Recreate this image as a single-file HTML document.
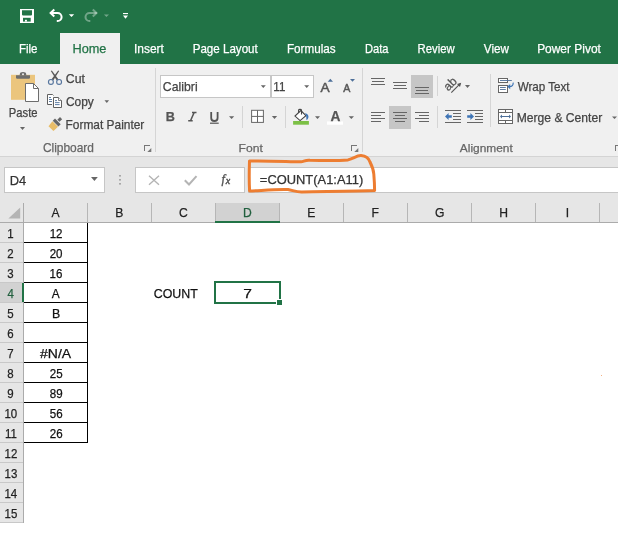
<!DOCTYPE html>
<html><head><meta charset="utf-8"><style>
html,body{margin:0;padding:0}
body{width:620px;height:533px;overflow:hidden;background:#fff;position:relative;font-family:"Liberation Sans",sans-serif}
.a{position:absolute;box-sizing:border-box}
</style></head><body>
<div class="a" style="left:0;top:0;width:618px;height:64px;background:#217346"></div>
<div class="a" style="left:60px;top:33px;width:60px;height:31px;background:#f0f0f0"></div>
<div class="a" style="left:0;top:64px;width:618px;height:92px;background:#f0f0f0"></div>
<div class="a" style="left:0;top:156px;width:618px;height:1px;background:#d4d4d4"></div>
<div class="a" style="left:0;top:157px;width:618px;height:66px;background:#e6e6e6"></div>
<!-- name box -->
<div class="a" style="left:4px;top:167px;width:101px;height:26px;background:#fff;border:1px solid #c6c6c6"></div>
<div class="a" style="left:135px;top:167px;width:110px;height:26px;background:#fff;border:1px solid #c6c6c6"></div>
<div class="a" style="left:248px;top:167px;width:370px;height:26px;background:#fff;border:1px solid #c6c6c6;border-right:none"></div>
<!-- combo boxes -->
<div class="a" style="left:160px;top:75px;width:111px;height:23px;background:#fff;border:1px solid #c6c6c6"></div>
<div class="a" style="left:271px;top:75px;width:43px;height:23px;background:#fff;border:1px solid #c6c6c6"></div>
<!-- selected align buttons -->
<div class="a" style="left:411px;top:75px;width:22px;height:23px;background:#c6c6c6"></div>
<div class="a" style="left:389px;top:106px;width:22px;height:23px;background:#c6c6c6"></div>
<!-- sheet -->
<div class="a" style="left:0;top:223px;width:24px;height:300px;background:#e6e6e6"></div>
<svg class="a" style="left:0;top:0;will-change:transform" width="620" height="533" viewBox="0 0 620 533">
<!-- QAT -->
<g fill="#fff">
  <rect x="20" y="9" width="14" height="14"/>
</g>
<g fill="#217346">
  <path d="M22 10.2 H32 V14.8 L31.3 15.6 H22.7 L22 14.8 Z"/>
  <rect x="23" y="17.8" width="7.7" height="3.8"/>
</g>
<rect x="25" y="19.8" width="1.9" height="1.8" fill="#fff"/>
<g fill="none" stroke="#fff" stroke-width="2" stroke-linecap="butt" stroke-linejoin="miter">
  <path d="M54.3 9.4 L50.6 12.9 L54.3 16.4"/>
  <path d="M50.2 12.9 H57.5 A4.1 4.1 0 0 1 57.5 21.1 H56.8"/>
</g>
<path d="M68.8 14.2 H74.2 L71.5 17.1 Z" fill="#fff"/>
<g fill="none" stroke="#fff" stroke-opacity="0.36" stroke-width="2">
  <path d="M92.8 9.4 L96.5 12.9 L92.8 16.4"/>
  <path d="M96.9 12.9 H89.6 A4.1 4.1 0 0 0 89.6 21.1 H90.3"/>
</g>
<path d="M103.9 14.6 H109 L106.45 17.1 Z" fill="#fff" fill-opacity="0.36"/>
<rect x="123" y="13" width="5" height="1.1" fill="#fff"/>
<path d="M123 15.5 H128 L125.5 18.8 Z" fill="#fff"/>

<!-- ribbon separators -->
<g fill="#d5d5d5">
  <rect x="155" y="68" width="1" height="84"/>
  <rect x="362" y="68" width="1" height="84"/>
  <rect x="490" y="74" width="1" height="53"/>
  <rect x="242" y="106" width="1" height="22"/>
  <rect x="285" y="106" width="1" height="22"/>
  <rect x="437" y="76" width="1" height="20"/>
  <rect x="437" y="106" width="1" height="22"/>
</g>

<!-- Paste -->
<rect x="11" y="74.8" width="24" height="25" fill="#ebc57d"/>
<path d="M19.8 75.6 V74.2 Q19.8 72 23 72 Q26.2 72 26.2 74.2 V75.6 Z" fill="#6d6d6d"/>
<path d="M16 75.3 H30 V77.6 Q30 78.8 28.8 78.8 H17.2 Q16 78.8 16 77.6 Z" fill="#6d6d6d"/>
<circle cx="23" cy="74.3" r="1" fill="#f0f0f0"/>
<path d="M25.5 83.5 H33.5 L38.5 88.5 V101.5 H25.5 Z" fill="#fff" stroke="#6d6d6d" stroke-width="1"/>
<path d="M33.5 83.5 V88.5 H38.5" fill="none" stroke="#6d6d6d" stroke-width="1"/>
<path d="M20 126.9 H25 L22.5 129.9 Z" fill="#666"/>

<!-- Cut -->
<g fill="#585858">
  <path d="M50.8 70.9 L51.8 70.5 L58.6 79.4 L56.6 80.2 Z"/>
  <path d="M59.2 70.9 L58.2 70.5 L51.4 79.4 L53.4 80.2 Z"/>
</g>
<g fill="none" stroke="#56759e" stroke-width="1.15">
  <circle cx="50.9" cy="81.9" r="2.45"/>
  <circle cx="59.1" cy="81.9" r="2.45"/>
</g>

<!-- Copy -->
<path d="M52 104.5 H47.5 V94.5 H52.5 L53.5 95.5" fill="#fff" stroke="#606060" stroke-width="1"/>
<path d="M53.5 97.5 H58.5 L61.5 100.5 V107.5 H53.5 Z" fill="#fff" stroke="#606060" stroke-width="1"/>
<path d="M58.5 97.5 V100.5 H61.5" fill="#fff" stroke="#606060" stroke-width="0.8"/>
<g fill="#4d6f99">
  <rect x="49" y="97" width="2" height="0.9"/>
  <rect x="49" y="99" width="3" height="0.9"/>
  <rect x="49" y="101" width="3" height="0.9"/>
  <rect x="55" y="100.2" width="2" height="0.9"/>
  <rect x="55" y="102.2" width="4.6" height="0.9"/>
  <rect x="55" y="104.2" width="4.6" height="0.9"/>
</g>

<!-- Format painter -->
<g transform="translate(56 123.2) rotate(45)">
  <path d="M-4 1.1 H4 L3.8 7.4 H-3.2 Z" fill="#e9bd68"/>
  <rect x="-4" y="-2.6" width="8" height="3.2" fill="#666"/>
  <rect x="-1.5" y="-7.2" width="3" height="3.8" fill="#666"/>
</g>
<path d="M104.5 100.3 H109.1 L106.8 103 Z" fill="#666"/>
<!-- clipboard launcher -->
<g fill="#777">
  <path d="M144 145 H150 V146 H145 V151 H144 Z"/>
  <path d="M151.3 148 V152 H147.3 Z"/>
</g>
<g fill="#777">
  <path d="M351 145 H357 V146 H352 V151 H351 Z"/>
  <path d="M358.3 148 V152 H354.3 Z"/>
</g>
<g fill="#777">
  <path d="M615 145 H618 V146 H616 V151 H615 Z"/>
</g>

<!-- font group -->
<path d="M260.8 85.2 H265.8 L263.3 87.9 Z" fill="#666"/>
<path d="M304.2 85.2 H309.2 L306.7 87.9 Z" fill="#666"/>
<path d="M327.7 81.8 L330.35 78.8 L333 81.8 Z" fill="#4d6f99"/>
<path d="M350 79 H355 L352.5 81.8 Z" fill="#4d6f99"/>
<!-- I U -->
<path d="M192 112.4 H196.5 M188.2 120.7 H192.7 M194.2 112.4 L190.5 120.7" fill="none" stroke="#555" stroke-width="1.5"/>
<path d="M211.2 112 V118 Q211.2 121 214.4 121 Q217.6 121 217.6 118 V112" fill="none" stroke="#555" stroke-width="1.8"/>
<rect x="210" y="122.6" width="8.7" height="1.2" fill="#555"/>
<path d="M229 116.2 H234.2 L231.6 119.1 Z" fill="#666"/>
<!-- borders -->
<rect x="251.6" y="110.3" width="11.8" height="12.1" fill="#fff" stroke="#666" stroke-width="1"/>
<path d="M257.5 110.3 V122.4 M251.6 116.4 H263.4" stroke="#666" stroke-width="1"/>
<path d="M271.9 115.9 H277.1 L274.5 119 Z" fill="#666"/>
<!-- fill color -->
<path d="M300.8 110.5 L305.9 115.6 L300.1 120.6 L295 116.1 Z" fill="#fff" stroke="#444" stroke-width="1.1"/>
<path d="M298.6 113 V110.2 Q298.6 109.4 300 109.4 Q301.5 109.4 301.5 110.2 V114.4" fill="none" stroke="#444" stroke-width="1.1"/>
<path d="M304.9 113.2 C308.2 113.4 310.2 117.4 306.5 120.2 L306.2 115.8 Z" fill="#3e74b5"/>
<rect x="293.1" y="121" width="15.8" height="3.7" fill="#7cc046"/>
<path d="M315 116.2 H320 L317.5 118.9 Z" fill="#666"/>
<!-- font color -->
<rect x="327" y="121.4" width="16" height="3.3" fill="#fff"/>
<path d="M348.7 116.2 H354 L351.35 119 Z" fill="#666"/>

<!-- alignment icons -->
<g fill="#666">
  <rect x="371" y="78" width="14" height="1"/><rect x="372" y="81" width="12" height="1"/><rect x="371" y="84" width="14" height="1"/>
  <rect x="393" y="82" width="14" height="1"/><rect x="394" y="85" width="12" height="1"/><rect x="393" y="88" width="14" height="1"/>
  <rect x="415" y="87" width="14" height="1"/><rect x="416" y="90" width="12" height="1"/><rect x="415" y="93" width="14" height="1"/>
  <rect x="371" y="112" width="14" height="1"/><rect x="371" y="115" width="10" height="1"/><rect x="371" y="118" width="14" height="1"/><rect x="371" y="121" width="10" height="1"/>
  <rect x="393" y="112" width="14" height="1"/><rect x="395" y="115" width="10" height="1"/><rect x="393" y="118" width="14" height="1"/><rect x="395" y="121" width="10" height="1"/>
  <rect x="415" y="112" width="14" height="1"/><rect x="419" y="115" width="10" height="1"/><rect x="415" y="118" width="14" height="1"/><rect x="419" y="121" width="10" height="1"/>
</g>
<!-- orientation -->
<g transform="translate(450.5 84.5) rotate(-45)">
  <text x="-6.6" y="3.4" font-size="12" font-family='"Liberation Sans", sans-serif' fill="#555" stroke="#555" stroke-width="0.3">ab</text>
</g>
<path d="M451.3 92.6 L460 83.9" stroke="#555" stroke-width="1.1"/>
<path d="M461.2 82.8 L457 84 L460 87 Z" fill="#555"/>
<path d="M465 85 H470 L467.5 88 Z" fill="#666"/>
<!-- indent -->
<g fill="#666">
  <rect x="445" y="110" width="16" height="1"/><rect x="453" y="113" width="8" height="1"/><rect x="453" y="116" width="8" height="1"/><rect x="453" y="119" width="8" height="1"/><rect x="445" y="122" width="16" height="1"/>
  <rect x="467" y="110" width="16" height="1"/><rect x="475" y="113" width="8" height="1"/><rect x="475" y="116" width="8" height="1"/><rect x="475" y="119" width="8" height="1"/><rect x="467" y="122" width="16" height="1"/>
</g>
<g fill="#3e74b5">
  <path d="M445 116.5 L448.6 113 V115.3 H451.8 V117.7 H448.6 V120 Z"/>
  <path d="M474 116.5 L470.4 113 V115.3 H467.2 V117.7 H470.4 V120 Z"/>
</g>
<!-- wrap text -->
<rect x="498.5" y="78.5" width="9" height="4" fill="#fff" stroke="#666" stroke-width="1"/>
<rect x="498.5" y="85.5" width="9" height="7" fill="#fff" stroke="#666" stroke-width="1"/>
<g fill="#4d6f99">
  <rect x="500" y="80.1" width="11.8" height="0.9"/>
  <rect x="500" y="87" width="5.8" height="0.9"/>
  <rect x="500" y="89.1" width="5.8" height="0.9"/>
</g>
<path d="M513.2 82.6 Q513.4 86.6 509.4 86.6 H508.6" fill="none" stroke="#3e74b5" stroke-width="1.2"/>
<path d="M507.2 86.6 L510.2 84 V89.2 Z" fill="#3e74b5"/>
<!-- merge -->
<rect x="498.5" y="109.5" width="14" height="14" fill="#fff" stroke="#666" stroke-width="1"/>
<path d="M498.5 112.5 H512.5 M498.5 120.5 H512.5 M505.5 109.5 V112.5 M505.5 120.5 V123.5" stroke="#666" stroke-width="1" fill="none"/>
<path d="M501 116.5 H510" stroke="#4d6f99" stroke-width="1"/>
<path d="M500 116.5 L502 114.6 V118.4 Z M511 116.5 L509 114.6 V118.4 Z" fill="#4d6f99"/>
<path d="M612 116.5 H617 L614.5 119 Z" fill="#666"/>

<!-- formula bar -->
<path d="M91 177 H97.8 L94.4 180.9 Z" fill="#666"/>
<g fill="#a8a8a8">
  <rect x="119" y="175" width="2" height="1.6"/>
  <rect x="119" y="179" width="2" height="1.6"/>
  <rect x="119" y="183" width="2" height="1.6"/>
</g>
<path d="M149 175.8 L159 184.8 M159 175.8 L149 184.8" stroke="#b4b4b4" stroke-width="1.4" fill="none"/>
<path d="M184.8 180.2 L189 184.5 L196.5 176.2" stroke="#b4b4b4" stroke-width="2" fill="none"/>
<text x="221.4" y="183.2" font-size="12.5" font-family='"Liberation Serif", serif' font-style="italic" fill="#555" stroke="#555" stroke-width="0.35">f</text>
<text x="225.8" y="183.6" font-size="10" font-family='"Liberation Serif", serif' font-style="italic" fill="#555" stroke="#555" stroke-width="0.45">x</text>

<!-- sheet grid -->
<rect x="215" y="203" width="64" height="18" fill="#d2d2d2"/>
<rect x="0" y="283" width="22" height="19" fill="#d2d2d2"/>
<g fill="#c8c8c8">
  <rect x="0" y="242" width="23" height="1"/><rect x="0" y="262" width="23" height="1"/><rect x="0" y="282" width="23" height="1"/><rect x="0" y="302" width="23" height="1"/>
  <rect x="0" y="322" width="23" height="1"/><rect x="0" y="342" width="23" height="1"/><rect x="0" y="362" width="23" height="1"/><rect x="0" y="382" width="23" height="1"/>
  <rect x="0" y="402" width="23" height="1"/><rect x="0" y="422" width="23" height="1"/><rect x="0" y="442" width="23" height="1"/><rect x="0" y="462" width="23" height="1"/>
  <rect x="0" y="482" width="23" height="1"/><rect x="0" y="502" width="23" height="1"/><rect x="0" y="522" width="23" height="1"/>
</g>
<g fill="#b6b6b6">
  <rect x="87" y="203" width="1" height="19"/><rect x="151" y="203" width="1" height="19"/><rect x="215" y="203" width="1" height="19"/>
  <rect x="279" y="203" width="1" height="19"/><rect x="343" y="203" width="1" height="19"/><rect x="407" y="203" width="1" height="19"/>
  <rect x="471" y="203" width="1" height="19"/><rect x="535" y="203" width="1" height="19"/><rect x="599" y="203" width="1" height="19"/>
</g>
<rect x="0" y="222" width="618" height="1" fill="#ababab"/>
<rect x="23" y="203" width="1" height="320" fill="#ababab"/>
<rect x="22" y="283" width="2" height="19" fill="#217346"/>
<rect x="215" y="221" width="65" height="2" fill="#217346"/>
<path d="M8.4 218.6 H20.2 V207.4 Z" fill="#b4b4b4"/>
<!-- A borders -->
<g fill="#000">
  <rect x="24" y="242" width="64" height="1"/><rect x="24" y="262" width="64" height="1"/><rect x="24" y="282" width="64" height="1"/><rect x="24" y="302" width="64" height="1"/>
  <rect x="24" y="322" width="64" height="1"/><rect x="24" y="342" width="64" height="1"/><rect x="24" y="362" width="64" height="1"/><rect x="24" y="382" width="64" height="1"/>
  <rect x="24" y="402" width="64" height="1"/><rect x="24" y="422" width="64" height="1"/><rect x="24" y="442" width="64" height="1"/>
  <rect x="87" y="223" width="1" height="220"/>
</g>
<!-- D4 selection -->
<g fill="#217346">
  <rect x="214" y="281" width="67" height="2"/>
  <rect x="214" y="281" width="2" height="23"/>
  <rect x="214" y="302" width="62" height="2"/>
  <rect x="279" y="281" width="2" height="18"/>
  <rect x="277" y="300" width="5" height="5"/>
</g>
<rect x="601" y="375" width="1" height="1" fill="#f4b183"/>

<!-- orange annotation -->
<path d="M249.5 161 C265 160.5 285 161.5 301 161.8 C304 161.5 305 159.8 310 160.2 C325 160.5 340 160.5 348 159.9 C353 158.5 357 155.5 361 155.6 C366 156 369 159 370 162 C372 166 373.5 170 373.8 174 C374.3 180 374.6 185 374.6 190.6 C360 191.2 330 191.5 302 192 C297 192.2 293 190.5 288 189.6 C275 189.2 262 190.5 249.6 191 C249 181 249.2 170 249.5 161 Z" fill="none" stroke="#ed7d31" stroke-width="3" stroke-linejoin="round"/>

<text x="18.88" y="52.70" font-size="12.75" textLength="18.56" lengthAdjust="spacingAndGlyphs" fill="#ffffff" stroke="#ffffff" stroke-width="0.25" font-family='"Liberation Sans", sans-serif' font-weight="normal" font-style="normal" >File</text>
<text x="133.92" y="52.70" font-size="12.75" textLength="29.95" lengthAdjust="spacingAndGlyphs" fill="#ffffff" stroke="#ffffff" stroke-width="0.25" font-family='"Liberation Sans", sans-serif' font-weight="normal" font-style="normal" >Insert</text>
<text x="192.67" y="52.70" font-size="12.75" textLength="65.10" lengthAdjust="spacingAndGlyphs" fill="#ffffff" stroke="#ffffff" stroke-width="0.25" font-family='"Liberation Sans", sans-serif' font-weight="normal" font-style="normal" >Page Layout</text>
<text x="286.96" y="52.70" font-size="12.75" textLength="48.72" lengthAdjust="spacingAndGlyphs" fill="#ffffff" stroke="#ffffff" stroke-width="0.25" font-family='"Liberation Sans", sans-serif' font-weight="normal" font-style="normal" >Formulas</text>
<text x="364.91" y="52.70" font-size="12.75" textLength="23.52" lengthAdjust="spacingAndGlyphs" fill="#ffffff" stroke="#ffffff" stroke-width="0.25" font-family='"Liberation Sans", sans-serif' font-weight="normal" font-style="normal" >Data</text>
<text x="417.60" y="52.70" font-size="12.75" textLength="37.09" lengthAdjust="spacingAndGlyphs" fill="#ffffff" stroke="#ffffff" stroke-width="0.25" font-family='"Liberation Sans", sans-serif' font-weight="normal" font-style="normal" >Review</text>
<text x="483.84" y="52.70" font-size="12.75" textLength="25.15" lengthAdjust="spacingAndGlyphs" fill="#ffffff" stroke="#ffffff" stroke-width="0.25" font-family='"Liberation Sans", sans-serif' font-weight="normal" font-style="normal" >View</text>
<text x="537.14" y="52.70" font-size="12.75" textLength="63.72" lengthAdjust="spacingAndGlyphs" fill="#ffffff" stroke="#ffffff" stroke-width="0.25" font-family='"Liberation Sans", sans-serif' font-weight="normal" font-style="normal" >Power Pivot</text>
<text x="72.48" y="52.70" font-size="12.75" textLength="33.92" lengthAdjust="spacingAndGlyphs" fill="#217346" stroke="#217346" stroke-width="0.25" font-family='"Liberation Sans", sans-serif' font-weight="normal" font-style="normal" >Home</text>
<text x="8.80" y="116.70" font-size="12.32" textLength="28.73" lengthAdjust="spacingAndGlyphs" fill="#444" stroke="#444" stroke-width="0.25" font-family='"Liberation Sans", sans-serif' font-weight="normal" font-style="normal" >Paste</text>
<text x="65.89" y="82.90" font-size="12.03" textLength="19.09" lengthAdjust="spacingAndGlyphs" fill="#444" stroke="#444" stroke-width="0.25" font-family='"Liberation Sans", sans-serif' font-weight="normal" font-style="normal" >Cut</text>
<text x="65.90" y="106.10" font-size="12.03" textLength="27.89" lengthAdjust="spacingAndGlyphs" fill="#444" stroke="#444" stroke-width="0.25" font-family='"Liberation Sans", sans-serif' font-weight="normal" font-style="normal" >Copy</text>
<text x="65.55" y="128.80" font-size="12.75" textLength="78.77" lengthAdjust="spacingAndGlyphs" fill="#444" stroke="#444" stroke-width="0.25" font-family='"Liberation Sans", sans-serif' font-weight="normal" font-style="normal" >Format Painter</text>
<text x="42.90" y="152.30" font-size="12.32" textLength="51.08" lengthAdjust="spacingAndGlyphs" fill="#666" stroke="#666" stroke-width="0.25" font-family='"Liberation Sans", sans-serif' font-weight="normal" font-style="normal" >Clipboard</text>
<text x="162.89" y="90.60" font-size="12.03" textLength="34.76" lengthAdjust="spacingAndGlyphs" fill="#444" stroke="#444" stroke-width="0.25" font-family='"Liberation Sans", sans-serif' font-weight="normal" font-style="normal" >Calibri</text>
<text x="273.33" y="90.60" font-size="12.03" textLength="12.03" lengthAdjust="spacingAndGlyphs" fill="#444" stroke="#444" stroke-width="0.25" font-family='"Liberation Sans", sans-serif' font-weight="normal" font-style="normal" >11</text>
<text x="238.53" y="152.30" font-size="11.59" textLength="24.24" lengthAdjust="spacingAndGlyphs" fill="#666" stroke="#666" stroke-width="0.25" font-family='"Liberation Sans", sans-serif' font-weight="normal" font-style="normal" >Font</text>
<text x="165.68" y="120.70" font-size="12.17" textLength="9.12" lengthAdjust="spacingAndGlyphs" fill="#555" stroke="#555" stroke-width="0.25" font-family='"Liberation Sans", sans-serif' font-weight="bold" font-style="normal" >B</text>
<text x="320.40" y="91.60" font-size="13.62" textLength="9.13" lengthAdjust="spacingAndGlyphs" fill="#555"  font-family='"Liberation Sans", sans-serif' font-weight="normal" font-style="normal" stroke="#555" stroke-width="0.5">A</text>
<text x="343.30" y="91.60" font-size="11.16" textLength="7.12" lengthAdjust="spacingAndGlyphs" fill="#555"  font-family='"Liberation Sans", sans-serif' font-weight="normal" font-style="normal" stroke="#555" stroke-width="0.45">A</text>
<text x="330.46" y="120.90" font-size="14.35" textLength="9.92" lengthAdjust="spacingAndGlyphs" fill="#555" stroke="#555" stroke-width="0.25" font-family='"Liberation Sans", sans-serif' font-weight="bold" font-style="normal" >A</text>
<text x="459.80" y="152.30" font-size="11.59" textLength="52.98" lengthAdjust="spacingAndGlyphs" fill="#666" stroke="#666" stroke-width="0.25" font-family='"Liberation Sans", sans-serif' font-weight="normal" font-style="normal" >Alignment</text>
<text x="517.64" y="91.00" font-size="13.04" textLength="51.97" lengthAdjust="spacingAndGlyphs" fill="#444" stroke="#444" stroke-width="0.25" font-family='"Liberation Sans", sans-serif' font-weight="normal" font-style="normal" >Wrap Text</text>
<text x="516.73" y="121.90" font-size="12.61" textLength="85.50" lengthAdjust="spacingAndGlyphs" fill="#444" stroke="#444" stroke-width="0.25" font-family='"Liberation Sans", sans-serif' font-weight="normal" font-style="normal" >Merge &amp; Center</text>
<text x="9.77" y="184.90" font-size="13.19" textLength="16.46" lengthAdjust="spacingAndGlyphs" fill="#333" stroke="#333" stroke-width="0.25" font-family='"Liberation Sans", sans-serif' font-weight="normal" font-style="normal" >D4</text>
<text x="259.86" y="184.40" font-size="11.88" textLength="103.34" lengthAdjust="spacingAndGlyphs" fill="#333" stroke="#333" stroke-width="0.25" font-family='"Liberation Sans", sans-serif' font-weight="normal" font-style="normal" >=COUNT(A1:A11)</text>
<text x="51.47" y="217.10" font-size="13.19" textLength="8.09" lengthAdjust="spacingAndGlyphs" fill="#222" stroke="#222" stroke-width="0.25" font-family='"Liberation Sans", sans-serif' font-weight="normal" font-style="normal" >A</text>
<text x="115.28" y="217.10" font-size="13.19" textLength="8.09" lengthAdjust="spacingAndGlyphs" fill="#222" stroke="#222" stroke-width="0.25" font-family='"Liberation Sans", sans-serif' font-weight="normal" font-style="normal" >B</text>
<text x="179.04" y="217.10" font-size="13.19" textLength="8.76" lengthAdjust="spacingAndGlyphs" fill="#222" stroke="#222" stroke-width="0.25" font-family='"Liberation Sans", sans-serif' font-weight="normal" font-style="normal" >C</text>
<text x="242.92" y="217.10" font-size="13.19" textLength="8.76" lengthAdjust="spacingAndGlyphs" fill="#22603f" stroke="#22603f" stroke-width="0.25" font-family='"Liberation Sans", sans-serif' font-weight="normal" font-style="normal" >D</text>
<text x="307.22" y="217.10" font-size="13.19" textLength="8.09" lengthAdjust="spacingAndGlyphs" fill="#222" stroke="#222" stroke-width="0.25" font-family='"Liberation Sans", sans-serif' font-weight="normal" font-style="normal" >E</text>
<text x="371.56" y="217.10" font-size="13.19" textLength="7.41" lengthAdjust="spacingAndGlyphs" fill="#222" stroke="#222" stroke-width="0.25" font-family='"Liberation Sans", sans-serif' font-weight="normal" font-style="normal" >F</text>
<text x="434.92" y="217.10" font-size="13.19" textLength="9.44" lengthAdjust="spacingAndGlyphs" fill="#222" stroke="#222" stroke-width="0.25" font-family='"Liberation Sans", sans-serif' font-weight="normal" font-style="normal" >G</text>
<text x="499.13" y="217.10" font-size="13.19" textLength="8.76" lengthAdjust="spacingAndGlyphs" fill="#222" stroke="#222" stroke-width="0.25" font-family='"Liberation Sans", sans-serif' font-weight="normal" font-style="normal" >H</text>
<text x="565.83" y="217.10" font-size="13.19" textLength="3.37" lengthAdjust="spacingAndGlyphs" fill="#222" stroke="#222" stroke-width="0.25" font-family='"Liberation Sans", sans-serif' font-weight="normal" font-style="normal" >I</text>
<text x="7.15" y="237.90" font-size="12.46" textLength="6.38" lengthAdjust="spacingAndGlyphs" fill="#222" stroke="#222" stroke-width="0.25" font-family='"Liberation Sans", sans-serif' font-weight="normal" font-style="normal" >1</text>
<text x="7.32" y="257.90" font-size="12.46" textLength="6.38" lengthAdjust="spacingAndGlyphs" fill="#222" stroke="#222" stroke-width="0.25" font-family='"Liberation Sans", sans-serif' font-weight="normal" font-style="normal" >2</text>
<text x="7.32" y="277.90" font-size="12.46" textLength="6.38" lengthAdjust="spacingAndGlyphs" fill="#222" stroke="#222" stroke-width="0.25" font-family='"Liberation Sans", sans-serif' font-weight="normal" font-style="normal" >3</text>
<text x="7.38" y="297.90" font-size="12.46" textLength="6.38" lengthAdjust="spacingAndGlyphs" fill="#22603f" stroke="#22603f" stroke-width="0.25" font-family='"Liberation Sans", sans-serif' font-weight="normal" font-style="normal" >4</text>
<text x="7.32" y="317.90" font-size="12.46" textLength="6.38" lengthAdjust="spacingAndGlyphs" fill="#222" stroke="#222" stroke-width="0.25" font-family='"Liberation Sans", sans-serif' font-weight="normal" font-style="normal" >5</text>
<text x="7.26" y="337.90" font-size="12.46" textLength="6.38" lengthAdjust="spacingAndGlyphs" fill="#222" stroke="#222" stroke-width="0.25" font-family='"Liberation Sans", sans-serif' font-weight="normal" font-style="normal" >6</text>
<text x="7.32" y="357.90" font-size="12.46" textLength="6.38" lengthAdjust="spacingAndGlyphs" fill="#222" stroke="#222" stroke-width="0.25" font-family='"Liberation Sans", sans-serif' font-weight="normal" font-style="normal" >7</text>
<text x="7.29" y="377.90" font-size="12.46" textLength="6.38" lengthAdjust="spacingAndGlyphs" fill="#222" stroke="#222" stroke-width="0.25" font-family='"Liberation Sans", sans-serif' font-weight="normal" font-style="normal" >8</text>
<text x="7.32" y="397.90" font-size="12.46" textLength="6.38" lengthAdjust="spacingAndGlyphs" fill="#222" stroke="#222" stroke-width="0.25" font-family='"Liberation Sans", sans-serif' font-weight="normal" font-style="normal" >9</text>
<text x="4.51" y="417.90" font-size="12.46" textLength="12.75" lengthAdjust="spacingAndGlyphs" fill="#222" stroke="#222" stroke-width="0.25" font-family='"Liberation Sans", sans-serif' font-weight="normal" font-style="normal" >10</text>
<text x="4.99" y="437.90" font-size="12.46" textLength="11.90" lengthAdjust="spacingAndGlyphs" fill="#222" stroke="#222" stroke-width="0.25" font-family='"Liberation Sans", sans-serif' font-weight="normal" font-style="normal" >11</text>
<text x="4.59" y="457.90" font-size="12.46" textLength="12.75" lengthAdjust="spacingAndGlyphs" fill="#222" stroke="#222" stroke-width="0.25" font-family='"Liberation Sans", sans-serif' font-weight="normal" font-style="normal" >12</text>
<text x="4.54" y="477.90" font-size="12.46" textLength="12.75" lengthAdjust="spacingAndGlyphs" fill="#222" stroke="#222" stroke-width="0.25" font-family='"Liberation Sans", sans-serif' font-weight="normal" font-style="normal" >13</text>
<text x="4.48" y="497.90" font-size="12.46" textLength="12.75" lengthAdjust="spacingAndGlyphs" fill="#222" stroke="#222" stroke-width="0.25" font-family='"Liberation Sans", sans-serif' font-weight="normal" font-style="normal" >14</text>
<text x="4.54" y="517.90" font-size="12.46" textLength="12.75" lengthAdjust="spacingAndGlyphs" fill="#222" stroke="#222" stroke-width="0.25" font-family='"Liberation Sans", sans-serif' font-weight="normal" font-style="normal" >15</text>
<text x="49.64" y="238.20" font-size="12.17" textLength="12.86" lengthAdjust="spacingAndGlyphs" fill="#111" stroke="#111" stroke-width="0.25" font-family='"Liberation Sans", sans-serif' font-weight="normal" font-style="normal" >12</text>
<text x="49.69" y="258.20" font-size="12.17" textLength="12.86" lengthAdjust="spacingAndGlyphs" fill="#111" stroke="#111" stroke-width="0.25" font-family='"Liberation Sans", sans-serif' font-weight="normal" font-style="normal" >20</text>
<text x="49.58" y="278.20" font-size="12.17" textLength="12.86" lengthAdjust="spacingAndGlyphs" fill="#111" stroke="#111" stroke-width="0.25" font-family='"Liberation Sans", sans-serif' font-weight="normal" font-style="normal" >16</text>
<text x="51.70" y="298.20" font-size="12.17" textLength="7.92" lengthAdjust="spacingAndGlyphs" fill="#111" stroke="#111" stroke-width="0.25" font-family='"Liberation Sans", sans-serif' font-weight="normal" font-style="normal" >A</text>
<text x="52.01" y="318.20" font-size="12.17" textLength="8.23" lengthAdjust="spacingAndGlyphs" fill="#111" stroke="#111" stroke-width="0.25" font-family='"Liberation Sans", sans-serif' font-weight="normal" font-style="normal" >B</text>
<text x="40.03" y="358.20" font-size="12.17" textLength="31.11" lengthAdjust="spacingAndGlyphs" fill="#111" stroke="#111" stroke-width="0.25" font-family='"Liberation Sans", sans-serif' font-weight="normal" font-style="normal" >#N/A</text>
<text x="49.72" y="378.20" font-size="12.17" textLength="12.86" lengthAdjust="spacingAndGlyphs" fill="#111" stroke="#111" stroke-width="0.25" font-family='"Liberation Sans", sans-serif' font-weight="normal" font-style="normal" >25</text>
<text x="49.78" y="398.20" font-size="12.17" textLength="12.86" lengthAdjust="spacingAndGlyphs" fill="#111" stroke="#111" stroke-width="0.25" font-family='"Liberation Sans", sans-serif' font-weight="normal" font-style="normal" >89</text>
<text x="49.78" y="418.20" font-size="12.17" textLength="12.86" lengthAdjust="spacingAndGlyphs" fill="#111" stroke="#111" stroke-width="0.25" font-family='"Liberation Sans", sans-serif' font-weight="normal" font-style="normal" >56</text>
<text x="49.72" y="438.20" font-size="12.17" textLength="12.86" lengthAdjust="spacingAndGlyphs" fill="#111" stroke="#111" stroke-width="0.25" font-family='"Liberation Sans", sans-serif' font-weight="normal" font-style="normal" >26</text>
<text x="153.78" y="298.10" font-size="13.33" textLength="44.07" lengthAdjust="spacingAndGlyphs" fill="#111" stroke="#111" stroke-width="0.25" font-family='"Liberation Sans", sans-serif' font-weight="normal" font-style="normal" >COUNT</text>
<text x="243.22" y="298.10" font-size="13.19" textLength="8.68" lengthAdjust="spacingAndGlyphs" fill="#111" stroke="#111" stroke-width="0.25" font-family='"Liberation Sans", sans-serif' font-weight="normal" font-style="normal" >7</text>
</svg>
</body></html>
